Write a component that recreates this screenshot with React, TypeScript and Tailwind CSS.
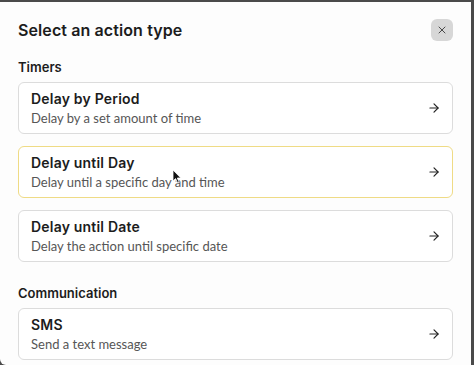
import React from "react";
import { ArrowRight, X } from "lucide-react";

type Action = {
  title: string;
  desc: string;
  active?: boolean;
};

const timers: Action[] = [
  { title: "Delay by Period", desc: "Delay by a set amount of time" },
  { title: "Delay until Day", desc: "Delay until a specific day and time", active: true },
  { title: "Delay until Date", desc: "Delay the action until specific date" },
];

const communication: Action[] = [{ title: "SMS", desc: "Send a text message" }];

const ActionCard = ({ item, children }: { item: Action; children?: React.ReactNode }) => (
  <button
    className={`relative flex w-full items-center justify-between rounded-md border bg-white py-[6px] pl-[12px] pr-[11px] text-left ${
      item.active ? "border-[#efdb85]" : "border-[#dcdcdc]"
    }`}
  >
    <div>
      <div className="font-['Inter'] text-[14px] font-semibold leading-[20px] tracking-[0.2px] text-[#1c1c1c]">
        {item.title}
      </div>
      <div className="font-['Lato'] text-[13px] leading-[18px] text-[#565656]">{item.desc}</div>
    </div>
    <ArrowRight size={14} strokeWidth={2} className="text-[#222]" />
    {children}
  </button>
);

const Section = ({ label, items, className }: { label: string; items: Action[]; className?: string }) => (
  <div className={className}>
    <div className="mb-[6px] font-['Inter'] text-[13px] font-semibold leading-[18px] text-[#1c1c1c]">{label}</div>
    <div className="flex flex-col gap-[12px]">
      {items.map((item) => (
        <ActionCard key={item.title} item={item}>
          {item.active && (
            <svg
              className="absolute left-[153px] top-[22px]"
              width="10"
              height="15"
              viewBox="0 0 10 15"
            >
              <path d="M1 1 L1 12 L3.6 9.6 L5.6 14 L7.2 13.3 L5.3 9 L8.8 9 Z" fill="#111" stroke="#fff" strokeWidth="0.8" />
            </svg>
          )}
        </ActionCard>
      ))}
    </div>
  </div>
);

const App = () => {
  return (
    <div className="h-[365px] w-[474px] overflow-hidden bg-[#4a4a4a] pr-[3px] pt-[2px]">
      <div className="h-[363px] rounded-bl-md bg-[#fdfdfd] px-[18px]">
        <div className="flex items-center justify-between pt-[17px]">
          <h1 className="font-['Inter'] text-[16px] font-semibold leading-[22px] tracking-[0.1px] text-[#1c1c1c]">
            Select an action type
          </h1>
          <button className="flex h-[22px] w-[22px] items-center justify-center rounded-md bg-[#d7d7d7]">
            <X size={12} strokeWidth={2} className="text-[#4a4a4a]" />
          </button>
        </div>

        <Section label="Timers" items={timers} className="mt-[17px]" />
        <Section label="Communication" items={communication} className="mt-[22px]" />
      </div>
    </div>
  );
};

export default App;
